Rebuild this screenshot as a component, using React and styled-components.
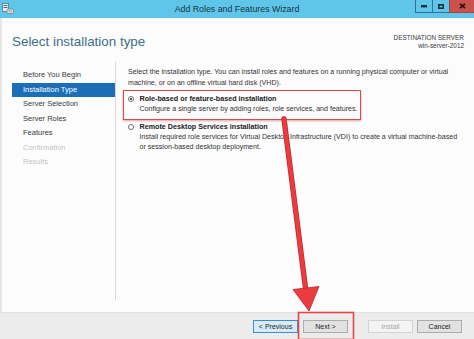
import React from "react";
import styled, { createGlobalStyle } from "styled-components";

const GlobalStyle = createGlobalStyle`
  html, body {
    margin: 0;
    padding: 0;
    width: 474px;
    height: 339px;
    overflow: hidden;
    background: #fcfcfc;
  }
  body {
    font-family: "Liberation Sans", Arial, sans-serif;
    color: #333;
  }
`;

const navItems = [
  { label: "Before You Begin" },
  { label: "Installation Type", active: true },
  { label: "Server Selection" },
  { label: "Server Roles" },
  { label: "Features" },
  { label: "Confirmation", disabled: true },
  { label: "Results", disabled: true },
];

const App = () => {
  return (
    <>
      <GlobalStyle />
      <Window>
        <TitleBar>
          <AppIcon viewBox="0 0 12 11">
            <rect x="0.5" y="0.5" width="6" height="8" fill="#e8eef2" stroke="#5d7480" strokeWidth="0.8" />
            <rect x="1.5" y="2" width="4" height="1" fill="#3b6f9a" />
            <rect x="1.5" y="4" width="4" height="1" fill="#3b6f9a" />
            <rect x="5" y="6" width="6.5" height="4.5" rx="0.6" fill="#d7dde2" stroke="#6c7b85" strokeWidth="0.7" />
            <rect x="6.5" y="7.5" width="3.5" height="1" fill="#8c9aa3" />
          </AppIcon>
          <Title>Add Roles and Features Wizard</Title>
          <Controls>
            <CtrlButton>
              <svg width="6" height="3" viewBox="0 0 6 3">
                <rect width="6" height="2.4" fill="#1b2f3a" />
              </svg>
            </CtrlButton>
            <CtrlButton>
              <svg width="6" height="5" viewBox="0 0 6 5">
                <rect x="0.8" y="0.8" width="4.4" height="3.4" fill="none" stroke="#1b2f3a" strokeWidth="1.6" />
              </svg>
            </CtrlButton>
            <CtrlButton $close>
              <svg width="7" height="6" viewBox="0 0 7 6">
                <path d="M1 0.8 L6 5.2 M6 0.8 L1 5.2" stroke="#2a0d0d" strokeWidth="1.6" />
              </svg>
            </CtrlButton>
          </Controls>
        </TitleBar>

        <Header>
          <Heading>Select installation type</Heading>
          <Destination>
            <div>DESTINATION SERVER</div>
            <div>win-server-2012</div>
          </Destination>
        </Header>

        <Main>
          <Nav>
            {navItems.map((item) => (
              <NavItem key={item.label} $active={item.active} $disabled={item.disabled}>
                {item.label}
              </NavItem>
            ))}
          </Nav>

          <Content>
            <Intro>
              Select the installation type. You can install roles and features on a running physical computer or virtual
              <br />
              machine, or on an offline virtual hard disk (VHD).
            </Intro>

            <Option $highlighted>
              <Radio $checked />
              <OptionText>
                <OptionTitle>Role-based or feature-based installation</OptionTitle>
                <OptionDesc>Configure a single server by adding roles, role services, and features.</OptionDesc>
              </OptionText>
            </Option>

            <Option>
              <Radio />
              <OptionText>
                <OptionTitle>Remote Desktop Services installation</OptionTitle>
                <OptionDesc>
                  Install required role services for Virtual Desktop Infrastructure (VDI) to create a virtual machine-based
                  <br />
                  or session-based desktop deployment.
                </OptionDesc>
              </OptionText>
            </Option>
          </Content>
        </Main>

        <Footer>
          <ButtonGroup>
            <Button $variant="primary">&lt; Previous</Button>
            <Button>Next &gt;</Button>
          </ButtonGroup>
          <ButtonGroup $tight>
            <Button $variant="disabled">Install</Button>
            <Button>Cancel</Button>
          </ButtonGroup>
        </Footer>

        <Annotation viewBox="0 0 474 339" width="474" height="339">
          <path d="M284 119 L305.5 288" stroke="#b52a2d" strokeWidth="5.4" strokeLinecap="round" />
          <path d="M284 119 L305.5 288" stroke="#ec3b3f" strokeWidth="4" strokeLinecap="round" />
          <polygon points="293,289.5 319,286.5 309,311" fill="#ec3b3f" stroke="#b52a2d" strokeWidth="0.8" strokeLinejoin="round" />
          <rect x="298.5" y="312.5" width="55" height="27" fill="none" stroke="#e4454a" strokeWidth="1.6" />
        </Annotation>
      </Window>
    </>
  );
};

export default App;

const Window = styled.div`
  position: relative;
  width: 474px;
  height: 339px;
  display: flex;
  flex-direction: column;
  background: #fcfcfc;
  box-shadow: inset 2px 0 0 #e6e6e6;
`;

const TitleBar = styled.div`
  height: 18px;
  flex: none;
  display: grid;
  grid-template-columns: 1fr auto 1fr;
  align-items: start;
  background: #5fc6ea;
`;

const AppIcon = styled.svg`
  width: 12px;
  height: 11px;
  margin: 3px 0 0 2px;
`;

const Title = styled.div`
  font-size: 8.8px;
  line-height: 18px;
  color: #173443;
  white-space: nowrap;
`;

const Controls = styled.div`
  justify-self: end;
  display: flex;
`;

const CtrlButton = styled.div`
  width: ${(p) => (p.$close ? "25px" : "17px")};
  height: 13px;
  box-sizing: border-box;
  display: flex;
  align-items: center;
  justify-content: center;
  background: ${(p) => (p.$close ? "#c9524d" : "#5fc6ea")};
  border: 1px solid ${(p) => (p.$close ? "#a8413d" : "#2f7390")};
  border-top: none;
  border-right: ${(p) => (p.$close ? "none" : "0")};
  &:first-child {
    border-left: 1px solid #2f7390;
  }
`;

const Header = styled.div`
  height: 44px;
  flex: none;
  box-sizing: border-box;
  display: flex;
  justify-content: space-between;
  align-items: flex-start;
  padding: 16px 10px 0 12px;
`;

const Heading = styled.h1`
  margin: 0;
  font-size: 13.4px;
  font-weight: normal;
  line-height: 16px;
  color: #3e6f87;
`;

const Destination = styled.div`
  text-align: right;
  font-size: 6.4px;
  line-height: 7.6px;
  color: #3a3a3a;
`;

const Main = styled.div`
  flex: 1;
  display: flex;
  min-height: 0;
`;

const Nav = styled.div`
  width: 116px;
  flex: none;
  box-sizing: border-box;
  padding: 6px 0 0 12px;
  margin-bottom: 12px;
  border-right: 1px solid #d9d9d9;
`;

const NavItem = styled.div`
  height: 14.5px;
  line-height: 14.5px;
  padding-left: 11px;
  font-size: 7.5px;
  white-space: nowrap;
  background: ${(p) => (p.$active ? "#1c6fb7" : "transparent")};
  color: ${(p) => (p.$active ? "#ffffff" : p.$disabled ? "#c4c4c4" : "#3a3a3a")};
`;

const Content = styled.div`
  flex: 1;
  padding: 5px 10px 0 12px;
  font-size: 7.1px;
  color: #333;
`;

const Intro = styled.p`
  margin: 0 0 2px;
  line-height: 10.5px;
  white-space: nowrap;
`;

const Option = styled.div`
  display: flex;
  align-items: flex-start;
  width: fit-content;
  margin-left: ${(p) => (p.$highlighted ? "-5px" : "-1px")};
  padding: ${(p) => (p.$highlighted ? "2.5px 2px 4.5px 4px" : "2px 3px 0 1px")};
  border: ${(p) => (p.$highlighted ? "1.5px solid #e4454a" : "none")};
  box-shadow: ${(p) => (p.$highlighted ? "0 1px 2px rgba(120, 20, 20, 0.35)" : "none")};
`;

const Radio = styled.span`
  position: relative;
  flex: none;
  width: 6px;
  height: 6px;
  box-sizing: border-box;
  margin: 2px 5.5px 0 0;
  border: 1px solid #6d6d6d;
  border-radius: 50%;
  background: #fff;
  &::after {
    content: "";
    display: ${(p) => (p.$checked ? "block" : "none")};
    position: absolute;
    left: 1px;
    top: 1px;
    width: 2px;
    height: 2px;
    border-radius: 50%;
    background: #1a1a1a;
  }
`;

const OptionText = styled.div`
  display: flex;
  flex-direction: column;
`;

const OptionTitle = styled.div`
  font-size: 7.2px;
  font-weight: bold;
  line-height: 10px;
  white-space: nowrap;
  color: #222;
`;

const OptionDesc = styled.div`
  line-height: 10.5px;
  white-space: nowrap;
`;

const Footer = styled.div`
  height: 27px;
  flex: none;
  box-sizing: border-box;
  display: flex;
  justify-content: flex-end;
  align-items: center;
  gap: 20px;
  padding-right: 12px;
  background: #ececec;
  border-top: 1px solid #e2e2e2;
`;

const ButtonGroup = styled.div`
  display: flex;
  gap: ${(p) => (p.$tight ? "4px" : "5px")};
`;

const Button = styled.button`
  width: 45px;
  height: 13px;
  box-sizing: border-box;
  padding: 0;
  font-family: inherit;
  font-size: 7px;
  line-height: 11px;
  border: 1px solid
    ${(p) => (p.$variant === "primary" ? "#3f8fd0" : p.$variant === "disabled" ? "#d3d3d3" : "#acacac")};
  background: ${(p) =>
    p.$variant === "primary" ? "#d6ebfa" : p.$variant === "disabled" ? "#f4f4f4" : "#e2e2e2"};
  color: ${(p) => (p.$variant === "disabled" ? "#a6a6a6" : "#222")};
`;

const Annotation = styled.svg`
  position: absolute;
  left: 0;
  top: 0;
  pointer-events: none;
`;
